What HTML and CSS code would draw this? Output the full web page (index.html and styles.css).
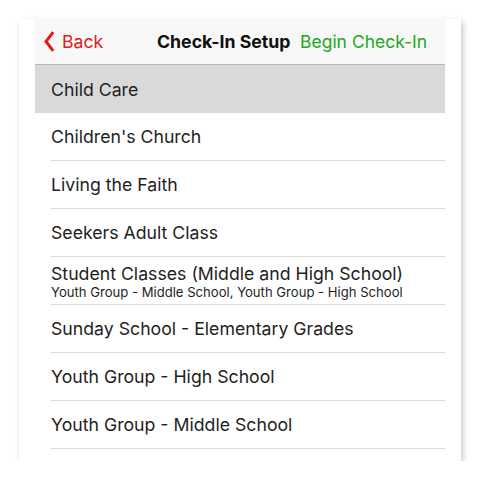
FILE: index.html
```html
<!DOCTYPE html>
<html>
<head>
<meta charset="utf-8">
<link rel="stylesheet" href="styles.css">
</head>
<body>
<div class="card">
  <div class="navbar">
    <div class="back">
      <svg class="chev" width="11" height="21" viewBox="0 0 11 21"><path d="M9.2 1.2 L2 10.5 L9.2 19.8" fill="none" stroke="#e21a1a" stroke-width="3" stroke-linecap="butt" stroke-linejoin="miter"/></svg>
      <span>Back</span>
    </div>
    <div class="title">Check-In Setup</div>
    <div class="action">Begin Check-In</div>
  </div>
  <ul class="list">
    <li class="row selected"><div class="inner"><span class="label">Child Care</span></div></li>
    <li class="row"><div class="inner"><span class="label">Children's Church</span></div></li>
    <li class="row"><div class="inner"><span class="label">Living the Faith</span></div></li>
    <li class="row"><div class="inner"><span class="label">Seekers Adult Class</span></div></li>
    <li class="row two"><div class="inner"><span class="label">Student Classes (Middle and High School)</span><span class="sub">Youth Group - Middle School, Youth Group - High School</span></div></li>
    <li class="row"><div class="inner"><span class="label">Sunday School - Elementary Grades</span></div></li>
    <li class="row"><div class="inner"><span class="label">Youth Group - High School</span></div></li>
    <li class="row"><div class="inner"><span class="label">Youth Group - Middle School</span></div></li>
  </ul>
</div>
</body>
</html>
```

FILE: styles.css
```css
html, body {
  margin: 0;
  padding: 0;
  background: #ffffff;
}
body {
  padding: 19px 0 0 19px;
  font-family: Inter, "Liberation Sans", Arial, sans-serif;
  color: #1e1e1e;
}
.card {
  width: 410px;
  height: 442px;
  padding: 0 16px;
  background: #ffffff;
  box-shadow: 2px 3px 6px rgba(0, 0, 0, 0.22);
}
.navbar {
  height: 46px;
  background: #f8f8f8;
  border-bottom: 1px solid #b9b9b9;
  box-sizing: border-box;
  display: flex;
  align-items: center;
  padding: 0 0 0 9px;
}
.back {
  display: flex;
  align-items: center;
  color: #e21a1a;
  font-size: 17.7px;
  gap: 7px;
  width: 113px;
}
.chev { display: block; }
.title {
  font-weight: 700;
  font-size: 17.7px;
  color: #111;
  width: 143px;
}
.action {
  color: #22a722;
  font-size: 17.5px;
}
.list {
  list-style: none;
  margin: 0;
  padding: 0;
}
.row {
  height: 48px;
}
.row .inner {
  height: 48px;
  margin-left: 16px;
  border-bottom: 1px solid #dcdcdc;
  box-sizing: border-box;
  display: flex;
  flex-direction: column;
  justify-content: center;
  padding-top: 1px;
}
.row.selected {
  background: #d9d9d9;
}
.row.selected .inner {
  border-bottom: none;
}
.label {
  font-size: 17.7px;
  line-height: 22px;
}
.sub {
  font-size: 13.1px;
  line-height: 14px;
}
```
